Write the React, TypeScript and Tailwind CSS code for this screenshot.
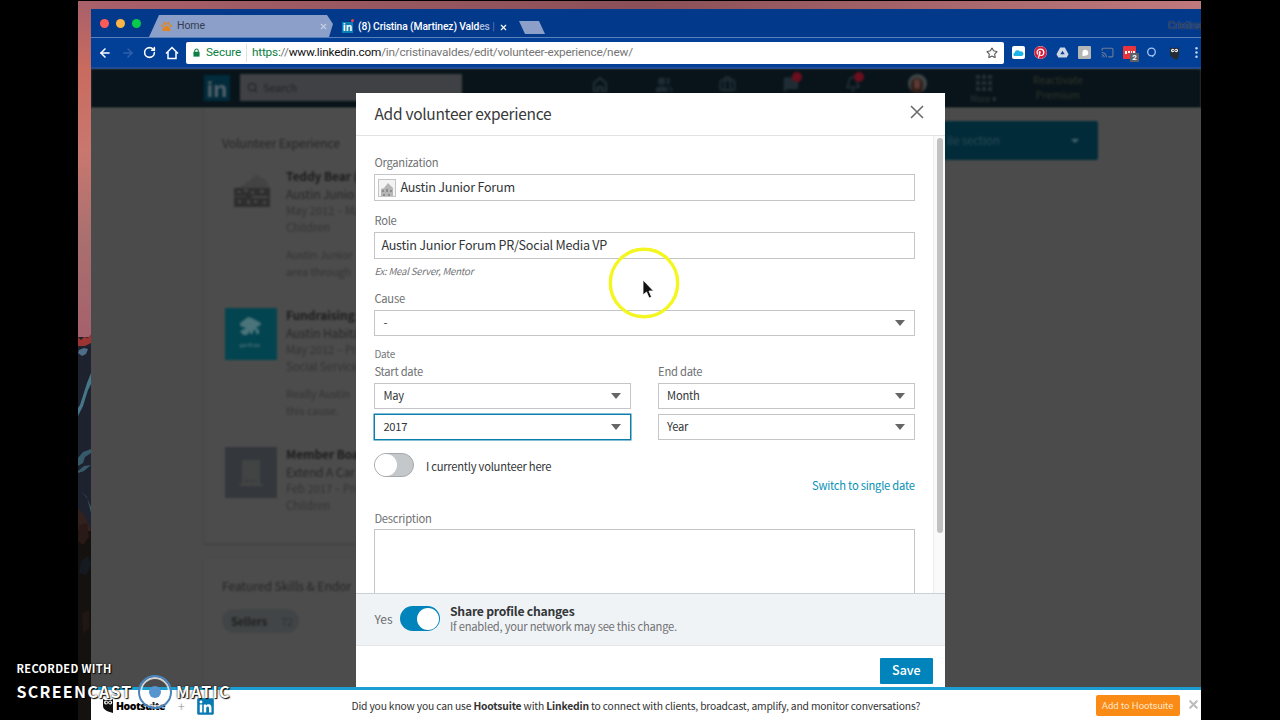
import React from "react";
import { ArrowLeft, ArrowRight, RotateCw, Star, Search, X, Cast, Users, Briefcase, Bell, MessageSquare } from "lucide-react";
import { FaLinkedin, FaPinterest, FaPaw } from "react-icons/fa";

const SANS = "font-['Noto_Sans_CJK_SC','Noto_Sans',sans-serif]";

function Wallpaper() {
  return (
    <svg className="block h-[719px] w-[13px] shrink-0" viewBox="0 0 13 719" preserveAspectRatio="none">
      <defs>
        <linearGradient id="sky" x1="0" y1="0" x2="0" y2="1">
          <stop offset="0" stopColor="#a8606a" />
          <stop offset="0.2" stopColor="#c96b5f" />
          <stop offset="0.45" stopColor="#c9776f" />
          <stop offset="0.7" stopColor="#a9706f" />
          <stop offset="1" stopColor="#a5616c" />
        </linearGradient>
      </defs>
      <rect width="13" height="719" fill="#1e222f" />
      <rect width="13" height="336" fill="url(#sky)" />
      <path d="M0 336l3 3 3-3 4 1 3-4v9l-6 3H0z" fill="#9c3532" />
      <path d="M1 349l5-2 4 1-2 5-4 2-4-3z" fill="#4f6d87" />
      <path d="M13 372l-4 10-7 22-2 3v8l5-10 5-16 3-6z" fill="#467689" />
      <path d="M0 457l5-6 8-3v4l-6 4-2 6-5 3zM0 470l6-5 7-1-7 6-6 2zM3 490l6 6 3 12 1 4v-6l-4-9z" fill="#365a69" />
      <path d="M0 508l6 6 7 14v12H0z" fill="#33211e" />
      <rect y="530" width="13" height="189" fill="#15110f" />
      <path d="M1 524l8-2 2 14-6 8-5-4z" fill="#2a1a17" />
      <path d="M3 560l7-5 3 9-5 10-7-2z" fill="#141a20" />
      <path d="M4 612l7-3v18l-6 6z" fill="#201614" />
    </svg>
  );
}

function TabStrip() {
  return (
    <div className="relative flex h-7 items-end bg-[#03398b]">
      <div className="flex w-[58px] items-center gap-[7px] self-center pl-[9px]">
        <span className="size-[9px] shrink-0 rounded-full bg-[#fc5b57]" />
        <span className="size-[9px] shrink-0 rounded-full bg-[#fdb548]" />
        <span className="size-[9px] shrink-0 rounded-full bg-[#08cb4b]" />
      </div>
      <div className="flex h-[22px] w-[186px] items-center bg-[#8c9fc8] pt-px pr-[7px] pl-[12px] [clip-path:polygon(10px_0,178px_0,184px_9px,180px_22px,0_22px)]">
        <FaPaw className="size-[11px] text-[#e0851f]" />
        <span className="ml-[5px] grow font-[Roboto,sans-serif] text-[10.5px] leading-none tracking-[-0.1px] text-[#333d52]">Home</span>
        <X className="size-[9px] text-[#c5cfe4]" strokeWidth={3} />
      </div>
      <div className="relative flex h-[22px] w-[176px] items-center pt-[2px] pl-[7px]">
        <span className="grid size-[11px] place-items-center bg-[#087fb5] font-['Open_Sans',sans-serif] text-[10px] leading-none font-bold text-white">in</span>
        <span className="absolute top-[4px] left-[16px] size-[3px] rounded-full bg-[#f0404a]" />
        <span className="ml-[5px] w-[140px] font-[Roboto,sans-serif] text-[10.3px] leading-4 font-medium tracking-[-0.13px] whitespace-nowrap text-white">(8) Cristina (Martinez) Vald<span className="text-[#a9bcdf]">es</span> <span className="text-[#5374ad]">|</span></span>
        <X className="ml-px size-[9px] shrink-0 text-white" strokeWidth={3} />
      </div>
      <div className="mb-[3px] ml-[8px] h-[13px] w-[26px] bg-[#8c9fc8] [clip-path:polygon(0_0,20px_0,26px_13px,6px_13px)]" />
      <span className="ml-auto h-[19px] w-[33px] overflow-hidden font-[Roboto,sans-serif] text-[10px] whitespace-nowrap text-[#1d2c47] [text-shadow:0_0_1px_#8f9aae]">Cristina</span>
    </div>
  );
}

function Extensions() {
  return (
    <div className="flex grow items-center gap-[9.3px] pl-[7.5px]">
      <span className="grid size-[13px] shrink-0 place-items-center rounded-[2px] bg-white">
        <svg viewBox="0 0 12 12" className="size-3"><path d="M2 9a2 2 0 0 1 .6-3.3A3 3 0 0 1 8 4.6 2.4 2.4 0 0 1 10 9z" fill="#1eb4e8" /></svg>
      </span>
      <span className="grid size-[13px] shrink-0 place-items-center rounded-full bg-white"><FaPinterest className="size-[13px] text-[#d31f3c]" /></span>
      <svg viewBox="0 0 14 14" className="size-[13px] shrink-0"><path d="M4.5 1.500h5L13.500 9l-2 3.500h-9L.5 9z" fill="#cfd6e3" /><path d="M7 5l2.300 4H4.700z" fill="#0b3f94" /></svg>
      <span className="grid size-[13px] shrink-0 place-items-center rounded-[1px] bg-[#b3b6b4]">
        <svg viewBox="0 0 12 12" className="size-[10px]"><path d="M3 6a3.500 3.500 0 1 1 4 3L3 10z" fill="#fff" /></svg>
      </span>
      <Cast className="size-[13px] shrink-0 text-[#6d7f99]" />
      <span className="relative grid size-[13px] shrink-0 place-items-center rounded-[1px] bg-[#e8353d]">
        <svg viewBox="0 0 13 13" className="size-[13px]" fill="#fff"><path d="M2 5h2v3H2zM5 5h2v2H5zM8 5h1v3H8zM10 5h2v2h-2z" /></svg>
        <span className="absolute -right-[3px] -bottom-[3px] grid h-[9px] w-[9px] place-items-center rounded-[1px] bg-[#5e6266] font-[Roboto,sans-serif] text-[8px] leading-none font-bold text-white">2</span>
      </span>
      <svg viewBox="0 0 13 13" className="size-[13px] shrink-0"><circle cx="6.5" cy="6" r="3.800" fill="none" stroke="#a9c5f4" strokeWidth="1.300" /><path d="M7 9l1 2.200" stroke="#a9c5f4" /></svg>
      <svg viewBox="0 0 12 14" className="h-[14px] w-[13px] shrink-0"><path d="M1.500 1l2 1h5l2-1v7c0 3-1 4-2 6C4.500 12 1.500 11 1.500 8z" fill="#252c33" /><circle cx="4.200" cy="4.500" r="1.700" fill="#fff" /><circle cx="7.800" cy="4.500" r="1.700" fill="#fff" /><circle cx="4.500" cy="4.500" r=".7" /><circle cx="7.500" cy="4.500" r=".7" /></svg>
      <svg viewBox="0 0 13 14" className="h-[13px] w-[13px] shrink-0" fill="#c7d6f2"><circle cx="6.500" cy="2.500" r="1.300" /><circle cx="6.500" cy="7" r="1.300" /><circle cx="6.500" cy="11.500" r="1.300" /></svg>
    </div>
  );
}

function Toolbar() {
  return (
    <div className="flex h-8 items-center border-t border-[#5a80bc] border-b-2 border-b-[#1e4b91] bg-[#023f96]">
      <div className="flex w-[95px] shrink-0 items-center gap-[8.5px] pl-[7px]">
        <ArrowLeft className="size-[14px] text-white" strokeWidth={2.6} />
        <ArrowRight className="size-[14px] text-[#2f61ab]" strokeWidth={2.4} />
        <RotateCw className="size-[13px] text-white" strokeWidth={2.8} />
        <svg viewBox="0 0 14 14" className="size-[14px]" fill="none" stroke="#fff" strokeWidth="1.5"><path d="M1 7.5L7 1.5l6 6M3 6v6.500h8V6" /></svg>
      </div>
      <div className="flex h-[22px] w-[818px] shrink-0 items-center rounded-[2px] bg-white pr-[6px] pl-[7px] font-[Roboto,sans-serif] leading-none">
        <svg viewBox="0 0 8 10" className="h-[9px] w-[7px]"><path d="M2 5V3a2 2 0 0 1 4 0v2" fill="none" stroke="#0b8043" strokeWidth="1.200" /><rect x="0.5" y="4.200" width="7" height="5.500" fill="#0b8043" /></svg>
        <span className="ml-[6px] w-[36px] text-[11.7px] tracking-[-0.1px] text-[#0b8043]">Secure</span>
        <span className="mr-[5px] ml-[4px] h-[18px] w-px bg-[#e0e0e0]" />
        <span className="grow text-[11.8px] tracking-[-0.2px] whitespace-nowrap text-[#757575]"><span className="text-[#0b8043]">https:</span>//<span className="text-[#111]">www.linkedin.com</span>/in/cristinavaldes/edit/volunteer-experience/new/</span>
        <Star className="size-[12px] text-[#555]" strokeWidth={2.2} />
      </div>
      <Extensions />
    </div>
  );
}

function SiteNav() {
  return (
    <div className="flex h-[39px] items-start bg-[#08141a] pl-[113px] blur-[0.8px]">
      <span className="mt-[6px] grid size-[26px] place-items-center bg-[#022b3b] font-['Open_Sans',sans-serif] text-[22px] leading-none font-bold text-[#52616a]">in</span>
      <div className="mt-[5px] ml-[10px] flex h-[27px] w-[222px] items-center bg-[#3f4144] pl-[7px]">
        <Search className="size-[11px] text-[#202224]" strokeWidth={2.5} />
        <span className={`${SANS} ml-[5px] text-[11px] leading-none tracking-[-0.2px] text-[#222426]`}>Search</span>
      </div>
      <div className="mt-[7px] ml-[130px] flex w-[335px] justify-between text-[#1f2c33]">
        <svg viewBox="0 0 16 16" className="size-4" fill="none" stroke="currentColor" strokeWidth="2.5"><path d="M2 15V7l6-5 6 5v8h-4v-4H6v4z" /></svg>
        <Users className="size-[18px] fill-current" />
        <Briefcase className="size-[17px]" strokeWidth={3} />
        <span className="relative"><MessageSquare className="size-4 fill-current" /><span className="absolute -top-[4px] left-[9px] size-[10px] rounded-full bg-[#6b0e1e]" /></span>
        <span className="relative"><Bell className="size-4" strokeWidth={3} /><span className="absolute -top-[4px] left-[9px] size-[10px] rounded-full bg-[#6b0e1e]" /></span>
        <span className="relative -mt-[2px] grid size-[19px] place-items-center overflow-hidden rounded-full bg-[#3f4446]"><span className="mt-1 h-4 w-[12px] rounded-full bg-[#301e18]" /><span className="absolute top-[5px] h-[10px] w-[6px] rounded-full bg-[#5a3a33]" /></span>
      </div>
      <div className="mt-[6px] ml-[37px] flex w-[40px] flex-col items-center">
        <svg viewBox="0 0 16 16" className="size-4" fill="#242f35"><path d="M0 0h4v4H0zM6 0h4v4H6zM12 0h4v4h-4zM0 6h4v4H0zM6 6h4v4H6zM12 6h4v4h-4zM0 12h4v4H0zM6 12h4v4H6zM12 12h4v4h-4z" /></svg>
        <span className={`${SANS} mt-px text-[8.5px] leading-3 text-[#2c3938]`}>More ▾</span>
      </div>
      <div className={`${SANS} mt-[3px] ml-[25px] w-[58px] text-center text-[10.3px] leading-[15px] text-[#34352a]`}>Reactivate<br />Premium</div>
    </div>
  );
}

type Entry = { icon: React.ReactNode; title: string; org: string; date: string; cause: string; note: string[] };

const building = (
  <svg viewBox="0 0 45 36" className="mt-[5px] ml-[5px] h-[36px] w-[45px]"><path d="M12 12L20 6l6-5 10 5 4 8v4H4v-3z" fill="#434343" /><path d="M4 14h36v19H4z" fill="#2e2e2e" /><path d="M7 17h4v2H7zM14 15h4v3h-4zM21 17h3v3h-3zM30 16h4v3h-4zM4 22h12v1H4zM22 22h16v2H22zM8 26h3v3H8zM17 26h3v4h-3zM24 26h3v3h-3zM33 27h3v3h-3z" fill="#464646" /></svg>
);
const habitat = (
  <svg viewBox="0 0 52 52" className="size-[52px]"><rect width="52" height="52" rx="1" fill="#02444f" /><path d="M15 15l8-6 4 1 9 5-1 3-4 1 3 3v4h-3v-4l-3 1v3h-3v-3l-3 4h-4l-3-4 6-3-6-2z" fill="#4a737a" /><path d="M14 36h4v4h-3zM18 36h4v3h-4zM23 35h4v4h-4zM28 36h7v3h-7z" fill="#265b65" /></svg>
);
const placeholder = (
  <svg viewBox="0 0 52 51" className="h-[51px] w-[52px]"><rect width="52" height="51" fill="#34373b" /><path d="M17 13h18v24h3v2H14v-2h3z" fill="#424443" /><path d="M20 34h12" stroke="#34373b" strokeWidth="2" strokeDasharray="3 2" /></svg>
);

const entries: Entry[] = [
  { icon: building, title: "Teddy Bear (", org: "Austin Junio", date: "May 2012 – Ma", cause: "Children", note: ["Austin Junior", "area through"] },
  { icon: habitat, title: "Fundraising", org: "Austin Habita", date: "May 2012 – Pr", cause: "Social Service", note: ["Really Austin", "this cause."] },
  { icon: placeholder, title: "Member Boa", org: "Extend A Car", date: "Feb 2017 – Pre", cause: "Children", note: [] },
];

function ProfilePage() {
  return (
    <div className={`${SANS} flex h-[579px] items-start justify-between overflow-hidden bg-[#4b4b4b] pr-[103px] pl-[112px] tracking-[-0.1px] whitespace-nowrap blur-[0.9px]`}>
      <div className="w-[330px]">
        <div className="h-[437px] border-b-2 border-l border-[#434343] bg-[#4c4c4c] pt-[25px] pl-[18px]">
          <div className="text-[12.3px] leading-5 tracking-[-0.15px] text-[#262626]">Volunteer Experience</div>
          <div className="mt-[14px] flex flex-col">
            {entries.map((e, i) => (
              <div key={i} className="flex h-[139px] gap-[9px] pl-px">
                <div className="mt-[2px] w-[54px] shrink-0 pl-[2px]">{e.icon}</div>
                <div className="text-[11.3px] leading-[16.5px] text-[#343434]">
                  <div className="text-[12px] leading-[18px] font-bold text-[#1d1d1d]">{e.title}</div>
                  <div className="text-[12px] leading-[17px] text-[#272727]">{e.org}</div>
                  <div>{e.date}</div>
                  <div className="mb-[11px]">{e.cause}</div>
                  {e.note.map((n) => <div key={n} className="text-[11px] leading-[17px]">{n}</div>)}
                </div>
              </div>
            ))}
          </div>
        </div>
        <div className="mt-[12px] h-[150px] border-t border-l border-[#474747] bg-[#4c4c4c] pt-[18px] pl-[18px]">
          <div className="text-[12.3px] leading-5 tracking-[-0.15px] text-[#262626]">Featured Skills &amp; Endor</div>
          <div className="mt-[13px] flex h-[24px] w-[77px] items-center rounded-full bg-[#424547] pl-[9px] text-[11px] leading-none"><b className="text-[#1f1f1f]">Sellers</b><span className="ml-[14px] text-[#303333]">72</span></div>
        </div>
      </div>
      <div className="mt-[13px] flex h-[39px] w-[300px] items-center justify-between rounded-[2px] bg-[#022b39] pr-[19px] pl-[149px] text-[11.4px] text-[#284b55]">
        <span>ile section</span><span className="border-x-[4px] border-t-[4px] border-x-transparent border-t-[#456570]" />
      </div>
    </div>
  );
}

function Label({ children, className = "" }: { children: React.ReactNode; className?: string }) {
  return <div className={`h-[18px] text-[11.2px] leading-[18px] text-[#6f7173] ${className}`}>{children}</div>;
}

function Select({ value, active = false, className = "" }: { value: string; active?: boolean; className?: string }) {
  return (
    <div className={`flex h-[26px] items-center justify-between pr-[9px] pl-[8px] text-[11.2px] leading-none text-[#333638] ${active ? "border border-[#0b7fab] shadow-[0_0_0_0.5px_#0b7fab]" : "border border-[#c3c5c7]"} ${className}`}>
      <span>{value}</span>
      <span className="border-x-[5px] border-t-[6px] border-x-transparent border-t-[#646668]" />
    </div>
  );
}

function Dialog() {
  return (
    <div className={`${SANS} absolute top-[24px] left-[264.5px] z-10 flex h-[594px] w-[589.4px] flex-col bg-white tracking-[-0.24px] whitespace-nowrap`}>
      <div className="flex h-[43px] shrink-0 items-center justify-between border-b border-[#e1e2e3] pr-[18px] pl-[19px]">
        <span className="text-[15.5px] leading-none tracking-[-0.3px] text-[#38393b]">Add volunteer experience</span>
        <svg viewBox="0 0 20 20" className="-mt-[4px] size-5" stroke="#6a6b6d" strokeWidth="1.6"><path d="M4 4l12 12M16 4L4 16" /></svg>
      </div>
      <div className="flex h-[457px] overflow-hidden">
        <div className="w-[578.4px] shrink-0 border-r border-[#ececec] pt-[17px] pr-[18.2px] pl-[18.9px]">
          <Label>Organization</Label>
          <div className="mt-[3px] flex h-[27px] items-center gap-[4px] border border-[#c3c5c7] pl-[3px] text-[12.6px] leading-none text-[#333638]">
            <svg viewBox="0 0 18 18" className="size-[18px]"><rect x=".5" y=".5" width="17" height="17" fill="#f3f3f3" stroke="#c5c5c5" /><path d="M3 10l3-1 4-5 5 5v8H3z" fill="#b5b5b5" /><path d="M4 11h2v2H4zM8 10h2v3H8zM12 11h2v2h-2zM5 15h2v2H5zM10 15h2v2h-2z" fill="#8d8d8d" /></svg>
            <span className="pb-px">Austin Junior Forum</span>
          </div>
          <Label className="mt-[10px]">Role</Label>
          <div className="mt-[3px] flex h-[27px] items-center border border-[#c3c5c7] pl-[6px] text-[12.6px] leading-none text-[#333638]">Austin Junior Forum PR/Social Media VP</div>
          <div className="mt-[3px] h-[18px] text-[9.7px] leading-[18px] text-[#737577] italic">Ex: Meal Server, Mentor</div>
          <Label className="mt-[9px]">Cause</Label>
          <Select value="-" className="mt-[3px]" />
          <div className="mt-[10px] h-[16px] text-[10px] leading-4 text-[#77797b]">Date</div>
          <div className="grid grid-cols-2 gap-x-[27px]">
            <Label>Start date</Label>
            <Label>End date</Label>
            <Select value="May" className="mt-[3px]" />
            <Select value="Month" className="mt-[3px]" />
            <Select value="2017" active className="mt-[5px]" />
            <Select value="Year" className="mt-[5px]" />
          </div>
          <div className="mt-[12.5px] flex h-6 items-center">
            <span className="flex h-6 w-[40px] items-center rounded-full border border-[#a6a9ab] bg-[#c5c8ca]"><span className="size-[22px] rounded-full bg-white" /></span>
            <span className="mt-[5px] ml-[11.500px] text-[11.2px] leading-none text-[#333638]">I currently volunteer here</span>
          </div>
          <div className="-mt-[0.5px] h-[18px] text-right text-[11.2px] leading-[18px] text-[#0591b5]">Switch to single date</div>
          <Label className="mt-[14.5px]">Description</Label>
          <div className="mt-[2.5px] h-[90px] border border-[#c3c5c7]" />
        </div>
        <div className="w-[11px] bg-[#fafafa] pt-[2px] pl-[3px]"><div className="h-[395px] w-[6px] rounded-full bg-[#c1c1c1]" /></div>
      </div>
      <div className="flex h-[53px] shrink-0 items-center border-y border-t-[#c9d0d6] border-b-[#e3e7ea] bg-[#f0f3f6] pb-[2px] pl-[19px]">
        <span className="w-[25.5px] text-[12px] leading-none tracking-normal text-[#6c6e70]">Yes</span>
        <span className="flex h-[25px] w-[40px] items-center justify-end rounded-full bg-[#0084bb] pr-px"><span className="size-[22px] rounded-full bg-white" /></span>
        <div className="ml-[10px]">
          <div className="text-[12.2px] leading-4 font-bold text-[#333638]">Share profile changes</div>
          <div className="-mt-px text-[11.2px] leading-4 text-[#707274]">If enabled, your network may see this change.</div>
        </div>
      </div>
      <div className="flex grow items-center justify-end pt-[8px] pr-[12px]">
        <button className="h-[26px] w-[53px] rounded-[1px] bg-[#0084bb] text-[12.5px] leading-none font-medium tracking-normal text-white">Save</button>
      </div>
    </div>
  );
}

function HootsuiteBar() {
  return (
    <div className={`${SANS} relative z-20 flex h-[33px] items-center border-t-[3px] border-[#1b9fd3] bg-white pt-[2px] text-[10.3px] whitespace-nowrap text-[#333]`}>
      <div className="flex w-[260.5px] items-center pl-[11px]">
        <svg viewBox="0 0 12 16" className="h-4 w-[12px]"><path d="M1 1l2 1h6l2-1v14C7 14 1 12 1 8z" fill="#111" /><circle cx="4" cy="4.500" r="2" fill="#fff" /><circle cx="8.200" cy="4.500" r="2" fill="#fff" /><circle cx="4.400" cy="4.500" r=".9" /><circle cx="8" cy="4.500" r=".9" /></svg>
        <span className="ml-[2px] w-[50px] font-['Open_Sans',sans-serif] text-[10.5px] leading-none font-extrabold tracking-[-0.5px] text-black">Hootsuite</span>
        <span className="ml-[12px] w-[18px] text-[12px] leading-none text-[#aaa]">+</span>
        <FaLinkedin className="size-[19px] text-[#0879b2]" />
      </div>
      <span className="w-[744px] leading-none tracking-[-0.17px]">Did you know you can use <b>Hootsuite</b> with <b>Linkedin</b> to connect with clients, broadcast, amplify, and monitor conversations?</span>
      <span className="-mt-px grid h-[21px] w-[84px] place-items-center rounded-[2px] bg-[#f98b16] font-[Roboto,sans-serif] text-[9.5px] leading-none text-[#ffe7c9]">Add to Hootsuite</span>
      <X className="-mt-[4px] ml-[7px] size-[13px] shrink-0 text-[#bcbcbc]" strokeWidth={4} />
    </div>
  );
}

function Watermark() {
  return (
    <div className={`${SANS} absolute top-[660px] left-[16.5px] z-30 whitespace-nowrap text-white [text-shadow:1px_1px_1px_#000,0_0_2px_#000]`}>
      <div className="text-[11px] leading-4 font-bold tracking-[0.33px]">RECORDED WITH</div>
      <div className="-mt-[1px] flex h-[34px] items-center text-[16px] leading-none font-bold">
        <span className="w-[120px] -translate-y-px tracking-[1.27px]">SCREENCAST</span>
        <svg viewBox="0 0 36 36" className="size-[36px] shrink-0"><circle cx="18" cy="18" r="14" fill="none" stroke="#fff" strokeOpacity=".75" strokeWidth="2" /><circle cx="18" cy="18" r="16" fill="none" stroke="#4a84bb" strokeWidth="2" /><circle cx="18" cy="18" r="6" fill="#5795cf" /></svg>
        <span className="ml-[3.5px] -translate-y-px tracking-[1.27px]">MATIC</span>
      </div>
    </div>
  );
}

export default function App() {
  return (
    <div className="relative h-[720px] w-[1280px] overflow-hidden bg-black pt-px pl-[78px]">
      <div className="flex w-[1123px]">
        <Wallpaper />
        <div className="flex h-[719px] w-[1110px] flex-col">
          <div className="h-[8px] shrink-0 bg-linear-to-r from-[#a8606a] via-[#8a5057] to-[#c07a7d]" />
          <TabStrip />
          <Toolbar />
          <div className="relative h-[618px] overflow-hidden bg-[#4b4b4b]">
            <SiteNav />
            <ProfilePage />
            <Dialog />
          </div>
          <HootsuiteBar />
        </div>
      </div>
      <svg viewBox="0 0 72 72" className="absolute top-[247px] left-[608px] z-20 size-[72px]">
        <circle cx="36" cy="36" r="33.700" fill="none" stroke="#f4f71f" strokeWidth="3.400" />
        <path d="M35 33v15l3.500-3 2.600 6 2.500-1-2.600-6h4.500z" fill="#111" stroke="#fff" strokeWidth=".8" />
      </svg>
      <Watermark />
    </div>
  );
}
